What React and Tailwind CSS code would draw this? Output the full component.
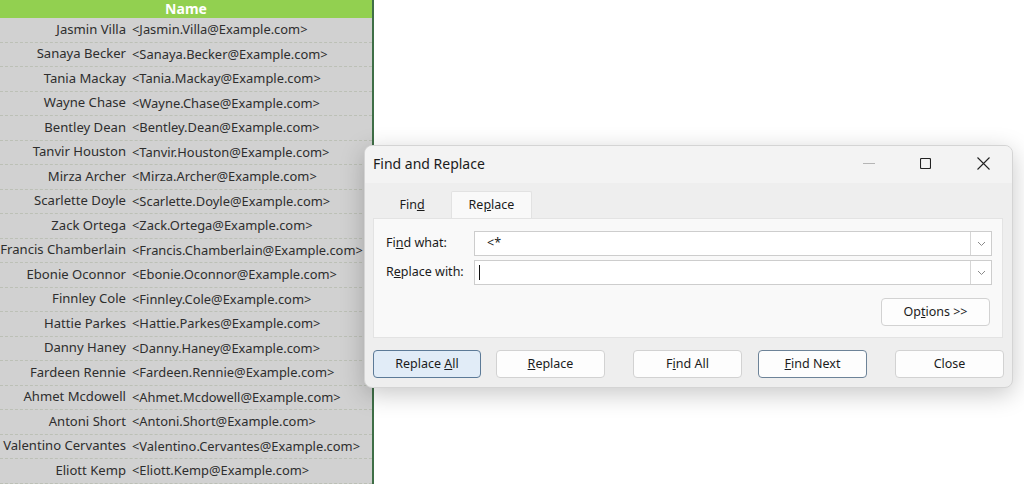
import React from 'react';

const PEOPLE = [
  'Jasmin Villa', 'Sanaya Becker', 'Tania Mackay', 'Wayne Chase', 'Bentley Dean',
  'Tanvir Houston', 'Mirza Archer', 'Scarlette Doyle', 'Zack Ortega', 'Francis Chamberlain',
  'Ebonie Oconnor', 'Finnley Cole', 'Hattie Parkes', 'Danny Haney', 'Fardeen Rennie',
  'Ahmet Mcdowell', 'Antoni Short', 'Valentino Cervantes', 'Eliott Kemp',
];

const email = (name) => `<${name.replace(' ', '.')}@Example.com>`;

function Sheet() {
  return (
    <div className="w-[374px] h-[484px] border-r-2 border-[#3f6f47] bg-[#d1d1d1] font-['Noto_Sans',sans-serif] text-[#2e2e2e]">
      <div className="h-[18px] bg-[#92d050] text-white font-bold text-[14px] leading-[18px] text-center">Name</div>
      {PEOPLE.map((p) => (
        <div key={p} className="h-[24.5px] flex border-b border-dashed border-[#bcc0b6]">
          <div className="w-[128px] flex justify-end items-center overflow-hidden whitespace-nowrap pr-[2px] text-[13.1px]">{p}</div>
          <div className="flex-1 flex items-center overflow-hidden whitespace-nowrap pl-[4px] text-[12.9px]">{email(p)}</div>
        </div>
      ))}
    </div>
  );
}

function Chevron() {
  return (
    <div className="w-[21px] h-full border-l border-[#d6d6d6] flex items-center justify-center">
      <svg width="9" height="6" viewBox="0 0 9 6" fill="none">
        <path d="M1 1l3.5 3.5L8 1" stroke="#8a8a8a" strokeWidth="1" />
      </svg>
    </div>
  );
}

function Btn({ children, variant }) {
  const cls =
    variant === 'default'
      ? 'bg-[#e1ecf7] border-[#5c7a97]'
      : variant === 'focus'
      ? 'bg-[#fdfdfd] border-[#6d8398]'
      : 'bg-[#fdfdfd] border-[#d2d2d2]';
  return (
    <div className={`w-[109px] h-[28px] rounded-[4px] border ${cls} flex items-center justify-center text-[12.5px] text-[#1b1b1b]`}>
      <span>{children}</span>
    </div>
  );
}

function Dialog() {
  return (
    <div className="absolute left-[364px] top-[145px] w-[649px] h-[243px] rounded-[8px] border border-[#d4d4d4] bg-[#eeeeee] shadow-[0_6px_24px_rgba(0,0,0,0.22)] overflow-hidden font-['Noto_Sans',sans-serif] text-[#1b1b1b]">
      {/* Title bar */}
      <div className="h-[37px] bg-[#f3f3f3] flex items-center pl-[8px] pb-[3px]">
        <div className="text-[14px] flex-1">Find and Replace</div>
        <div className="w-[12px] h-px bg-[#b5b5b5] mr-[45px]" />
        <svg width="11" height="11" viewBox="0 0 11 11" className="mr-[46px]">
          <rect x="0.5" y="0.5" width="10" height="10" rx="1" fill="none" stroke="#222" strokeWidth="1.1" />
        </svg>
        <svg width="13" height="13" viewBox="0 0 13 13" className="mr-[22px]">
          <path d="M0.5 0.5l12 12M12.5 0.5l-12 12" stroke="#222" strokeWidth="1.1" />
        </svg>
      </div>

      <div className="px-[8px]">
        {/* Tabs */}
        <div className="flex mt-[9px] h-[26px] items-end">
          <div className="w-[78px] h-[25px] flex items-center justify-center text-[12.5px]">
            <span>Fin<span className="underline">d</span></span>
          </div>
          <div className="w-[81px] h-[27px] bg-[#f9f9f9] border border-b-0 border-[#e2e2e2] rounded-t-[2px] flex items-center justify-center text-[12.5px]">
            <span>Re<span className="underline">p</span>lace</span>
          </div>
        </div>

        {/* Panel */}
        <div className="w-[630px] h-[120px] bg-[#f9f9f9] border border-[#e3e3e3] pt-[12px] pr-[10px]">
          <div className="flex items-center h-[25px]">
            <div className="w-[100px] pl-[12px] text-[12.5px]">
              Fi<span className="underline">n</span>d what:
            </div>
            <div className="flex-1 h-[25px] bg-white border border-[#cdcdcd] flex items-center">
              <div className="flex-1 pl-[12px] text-[12.5px]">&lt;*</div>
              <Chevron />
            </div>
          </div>
          <div className="flex items-center h-[25px] mt-[4px]">
            <div className="w-[100px] pl-[12px] text-[12.5px]">
              R<span className="underline">e</span>place with:
            </div>
            <div className="flex-1 h-[25px] bg-white border border-[#cdcdcd] flex items-center">
              <div className="flex-1 pl-[4px]">
                <div className="w-px h-[15px] bg-[#111]" />
              </div>
              <Chevron />
            </div>
          </div>
          <div className="flex justify-end mt-[13px] pr-[2px]">
            <Btn>
              Op<span className="underline">t</span>ions &gt;&gt;
            </Btn>
          </div>
        </div>

        {/* Buttons */}
        <div className="flex mt-[12px]">
          <Btn variant="default">
            Replace <span className="underline">A</span>ll
          </Btn>
          <div className="ml-[15px]">
            <Btn>
              <span className="underline">R</span>eplace
            </Btn>
          </div>
          <div className="ml-[28px]">
            <Btn>
              F<span className="underline">i</span>nd All
            </Btn>
          </div>
          <div className="ml-[16px]">
            <Btn variant="focus">
              <span className="underline">F</span>ind Next
            </Btn>
          </div>
          <div className="ml-[28px]">
            <Btn>Close</Btn>
          </div>
        </div>
      </div>
    </div>
  );
}

export default function App() {
  return (
    <div className="relative w-[1024px] h-[484px] overflow-hidden bg-white">
      <Sheet />
      <Dialog />
    </div>
  );
}
